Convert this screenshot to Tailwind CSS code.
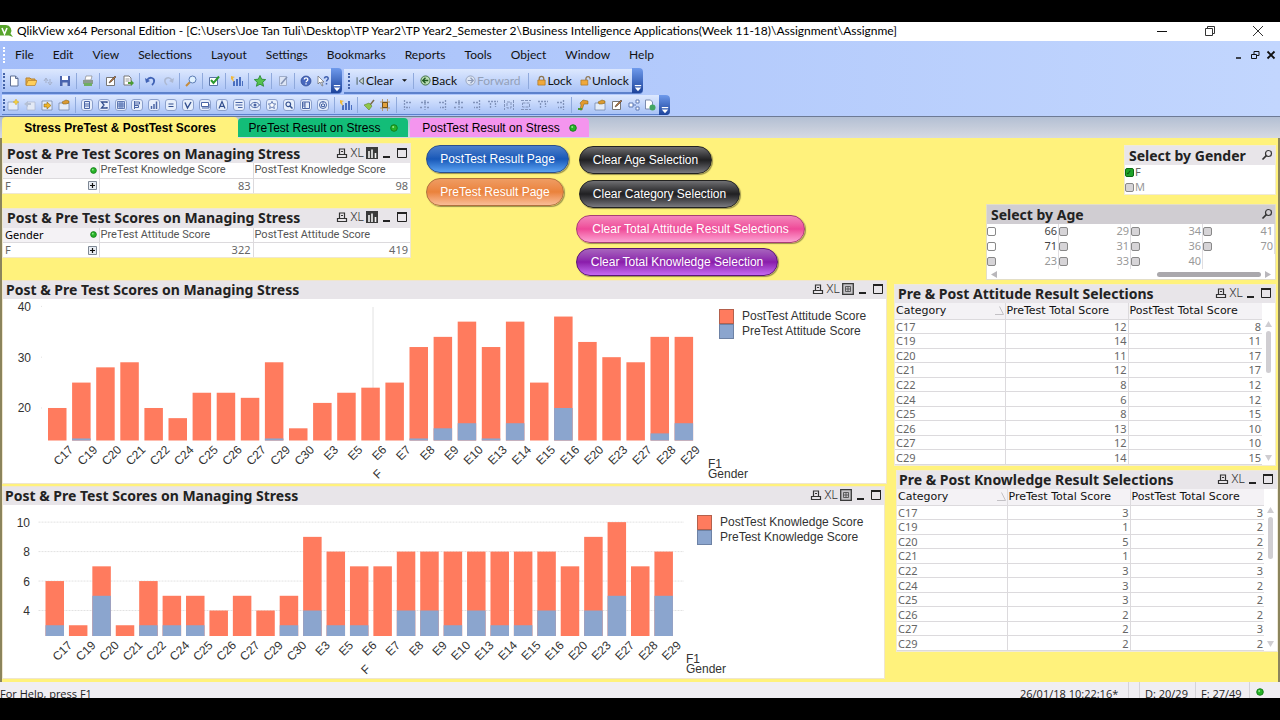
<!DOCTYPE html>
<html lang="en">
<head>
  <meta charset="UTF-8">
  <meta name="viewport" content="width=device-width, initial-scale=1.0">
  <title>QlikView x64 Personal Edition</title>
  <script src="https://cdn.jsdelivr.net/npm/@tailwindcss/browser@4"></script>
</head>
<body class="bg-black min-h-screen overflow-x-hidden font-['Noto_Sans',sans-serif] text-[11px] text-[#222]">

  <!-- Icon set -->
  <svg class="hidden">
    <symbol id="new" viewBox="0 0 12 12"><path d="M2.5 1h5L10 3.500V11H2.500z" fill="#fff" stroke="#5f7096"/><path d="M7.500 1v2.500H10" fill="none" stroke="#5f7096"/></symbol>
    <symbol id="open" viewBox="0 0 12 12"><path d="M1 10V3h4l1 1h4v2" fill="#e8b04a" stroke="#b7812a"/><path d="M1 10.500l2-5h9l-2 5z" fill="#ffcf5c" stroke="#b7812a" stroke-width=".7"/></symbol>
    <symbol id="refresh" viewBox="0 0 12 12"><path d="M2 6l2-3 2 3M4 4v4M6 7l2 3 2-3M8 8V4" fill="none" stroke="#a3afc9"/></symbol>
    <symbol id="save" viewBox="0 0 12 12"><path d="M1 1h10v10H1z" fill="#4a64ad"/><path d="M3 1h6v4H3z" fill="#fff"/><path d="M3.500 7.500h5V11h-5z" fill="#c6d2ef"/></symbol>
    <symbol id="print" viewBox="0 0 12 12"><path d="M3 5l1-4h6L9 5z" fill="#fff" stroke="#777" stroke-width=".6"/><path d="M1 5h10v4H1z" fill="#8c9a90"/><path d="M2 8h8v3H2z" fill="#6fae62"/></symbol>
    <symbol id="edit" viewBox="0 0 12 12"><path d="M1.500 2.500h8v8h-8z" fill="#fff" stroke="#777"/><path d="M4 8l1-2 5-5 1 1-5 5z" fill="#b8753c" stroke="#333" stroke-width=".5"/></symbol>
    <symbol id="export" viewBox="0 0 12 12"><path d="M2 1h5l2 2v7H2z" fill="#fff" stroke="#777"/><path d="M3.500 4h4M3.500 6h4" stroke="#999"/><path d="M6 7h3V5l3 3-3 3V9H6z" fill="#4b9b35"/></symbol>
    <symbol id="undo" viewBox="0 0 12 12"><path d="M2 5c3-4 8-2 7 2 0 1-1 2-2 3" fill="none" stroke="#3f62b5" stroke-width="1.800"/><path d="M0 3l5 3-4 2z" fill="#3f62b5"/></symbol>
    <symbol id="redo" viewBox="0 0 12 12"><path d="M10 5C7 1 2 3 3 7c0 1 1 2 2 3" fill="none" stroke="#adb9d2" stroke-width="1.500"/><path d="M12 3L7 6l4 2z" fill="#adb9d2"/></symbol>
    <symbol id="search" viewBox="0 0 12 12"><path d="M5 7l-4 4" stroke="#c58b3c" stroke-width="2"/><circle cx="7.500" cy="4.500" r="3.500" fill="#dff1ff" stroke="#5d7db5"/></symbol>
    <symbol id="check" viewBox="0 0 12 12"><path d="M1.500 2.500h8v8h-8z" fill="#fff" stroke="#5973a6"/><path d="M3 5l2.500 3L11 1.500" fill="none" stroke="#2d9a2d" stroke-width="2"/></symbol>
    <symbol id="chart" viewBox="0 0 12 12"><path d="M2 6h2v5H2zM5 4h2v7H5zM8 2h2v9H8zM11 6h1v5h-1z" fill="#4b6fc0"/><path d="M0 1l4 1-2 1 1 4-3-3z" fill="#f0b93a"/></symbol>
    <symbol id="star" viewBox="0 0 12 12"><path d="M6 .5l1.700 3.700 4 .4-3 2.700.9 4L6 9.200l-3.600 2.100.9-4-3-2.700 4-.4z" fill="#56c24f" stroke="#23852c" stroke-width=".8"/></symbol>
    <symbol id="note" viewBox="0 0 12 12"><path d="M2.500 1.500h7v9h-7z" fill="#dde5f5" stroke="#9eacc9"/><path d="M4 9l6-7" stroke="#8493b4" stroke-width="1.600"/></symbol>
    <symbol id="help" viewBox="0 0 12 12"><circle cx="6" cy="6" r="5" fill="#4767bd" stroke="#2d478f" stroke-width=".7"/><path d="M4.300 4.600c0-2.200 3.600-2.200 3.500 0C7.700 6 6 6 6 7.300M6 8.300v1.300" fill="none" stroke="#fff" stroke-width="1.300"/></symbol>
    <symbol id="whats" viewBox="0 0 12 12"><path d="M1 1v8l2-2 2 4 1-.5L4.500 7H7z" fill="#fff" stroke="#555" stroke-width=".6"/><path d="M7.500 3.500c0-2.500 3.700-2.500 3.700 0 0 1.500-1.700 1.500-1.700 3M9.500 8v1.500" fill="none" stroke="#3f5fae" stroke-width="1.500"/></symbol>
    <symbol id="sheet" viewBox="0 0 12 12"><path d="M1 3h10v8H1z" fill="#e4ecf9" stroke="#7d93c0" stroke-width=".7"/><path d="M9 0l1 2 2 1-2 1-1 2-1-2-2-1 2-1z" fill="#f5d13e" stroke="#c79d1c" stroke-width=".4"/></symbol>
    <symbol id="sheetprev" viewBox="0 0 12 12"><path d="M3 3h8v8H3z" fill="#e3e9f5" stroke="#aab6ce" stroke-width=".7"/><path d="M0 5l4-3v2h3v2H4v2z" fill="#b5c0d5"/></symbol>
    <symbol id="sheetnext" viewBox="0 0 12 12"><path d="M1 2h10v9H1z" fill="#e4ecf9" stroke="#6c7ea5" stroke-width=".7"/><path d="M3 5h3V3l4 3.500L6 10V8H3z" fill="#f0b429" stroke="#7b5a10" stroke-width=".5"/></symbol>
    <symbol id="sheetprop" viewBox="0 0 12 12"><path d="M1 4h10v7H1z" fill="#e4ecf9" stroke="#6c7ea5" stroke-width=".7"/><path d="M4 3l4-2 3 1v2L8 5 5 5z" fill="#dc9a32" stroke="#7b5a10" stroke-width=".5"/></symbol>
    <symbol id="painter" viewBox="0 0 12 12"><path d="M3 4l3-3 5 1v3L7 5l-2 6H3l1-5z" fill="#e39a2e" stroke="#7b5a10" stroke-width=".5"/><path d="M1 9h4v2H1z" fill="#4b9b35"/></symbol>
    <symbol id="frame" viewBox="0 0 12 12"><rect x=".5" y=".5" width="11" height="11" rx="2.500" fill="#e6eefb" stroke="#8ba0cc"/></symbol>
    <symbol id="o-list" viewBox="0 0 12 12"><use href="#frame"/><path d="M3.500 2.500h5v7h-5zM3.500 5h5M3.500 7h5" fill="none" stroke="#4a65a5"/></symbol>
    <symbol id="o-sum" viewBox="0 0 12 12"><use href="#frame"/><path d="M9 4V3H3.500L6 6 3.500 9H9V8" fill="none" stroke="#34508f" stroke-width="1.300"/></symbol>
    <symbol id="o-table" viewBox="0 0 12 12"><use href="#frame"/><path d="M2.500 2.500h7v7h-7zM2.500 5h7M2.500 7h7M5 2.500v7M7 2.500v7" fill="#bccdf0" stroke="#4a65a5" stroke-width=".8"/></symbol>
    <symbol id="o-multi" viewBox="0 0 12 12"><use href="#frame"/><path d="M3.500 2v8M3.500 3h5v2h-5M3.500 6.500h4v2h-4" fill="none" stroke="#4a65a5"/></symbol>
    <symbol id="o-bars" viewBox="0 0 12 12"><use href="#frame"/><path d="M3.500 10V7M6 10V5M8.500 10V2.500" stroke="#4a65a5" stroke-width="1.500"/></symbol>
    <symbol id="o-input" viewBox="0 0 12 12"><use href="#frame"/><path d="M3.500 5h5M3.500 7.500h5" stroke="#34508f" stroke-width="1.200"/></symbol>
    <symbol id="o-check" viewBox="0 0 12 12"><use href="#frame"/><path d="M3 3.500L5.500 9 9 3" fill="none" stroke="#34508f" stroke-width="1.400"/></symbol>
    <symbol id="o-button" viewBox="0 0 12 12"><use href="#frame"/><path d="M2.500 3.500h7v4h-7z" fill="#fff" stroke="#4a65a5"/><path d="M3 9h7V5" fill="none" stroke="#4a65a5"/></symbol>
    <symbol id="o-text" viewBox="0 0 12 12"><use href="#frame"/><path d="M3 9.500L6 2.500l3 7M4 7.300h4" fill="none" stroke="#34508f" stroke-width="1.200"/></symbol>
    <symbol id="o-line" viewBox="0 0 12 12"><use href="#frame"/><path d="M2.500 3.500h7M2.500 6h7M5 8.500h4.500" stroke="#4a65a5" stroke-width="1.200"/></symbol>
    <symbol id="o-slider" viewBox="0 0 12 12"><use href="#frame"/><path d="M1.500 6c2-3.500 7-3.500 9 0-2 3.500-7 3.500-9 0z" fill="none" stroke="#4a65a5"/><circle cx="6" cy="6" r="1.500" fill="#4a65a5"/></symbol>
    <symbol id="o-star" viewBox="0 0 12 12"><use href="#frame"/><path d="M6 2.300l1.100 2.500 2.600.2-2 1.800.7 2.700L6 8 3.600 9.500l.7-2.700-2-1.800 2.600-.2z" fill="#fff" stroke="#4a65a5" stroke-width=".8"/></symbol>
    <symbol id="o-find" viewBox="0 0 12 12"><use href="#frame"/><circle cx="5.300" cy="5.300" r="2.300" fill="none" stroke="#34508f" stroke-width="1.200"/><path d="M7 7l2.500 2.500" stroke="#34508f" stroke-width="1.500"/></symbol>
    <symbol id="o-cont" viewBox="0 0 12 12"><use href="#frame"/><path d="M2.500 3h7v6.500h-7zM5 3v6.500M2.500 5H5M2.500 7H5" fill="none" stroke="#4a65a5"/></symbol>
    <symbol id="o-custom" viewBox="0 0 12 12"><use href="#frame"/><circle cx="6" cy="6" r="3.500" fill="none" stroke="#4a65a5"/><path d="M6 3v3M4.500 5v2.500h3V5" fill="none" stroke="#4a65a5"/></symbol>
    <symbol id="brush" viewBox="0 0 12 12"><path d="M11 1L7 6" stroke="#7b6a4b" stroke-width="1.500"/><path d="M1 6l5-2 3 3-3 4z" fill="#8fc74a" stroke="#61822c" stroke-width=".6"/></symbol>
    <symbol id="grid" viewBox="0 0 12 12"><path d="M3.500 0v12M8.500 0v12M1 3h10M1 9h10" stroke="#b08a4e" stroke-width=".8"/><path d="M3.500 3.500h5v5h-5z" fill="#e3a13c" stroke="#72521f"/></symbol>
    <symbol id="a-left" viewBox="0 0 12 12"><path d="M2.500 1v10M4 3.500h6M4 8.500h4" stroke="#8294bb" stroke-width="1.300" stroke-dasharray="2 1"/></symbol>
    <symbol id="a-mid" viewBox="0 0 12 12"><path d="M6 1v10M2 3.500h8M1 8.500h3M8 8.500h3" stroke="#8294bb" stroke-width="1.300" stroke-dasharray="2 1"/></symbol>
    <symbol id="a-right" viewBox="0 0 12 12"><path d="M9.500 1v10M8 3.500H2M8 8.500H4" stroke="#8294bb" stroke-width="1.300" stroke-dasharray="2 1"/></symbol>
    <symbol id="a-top" viewBox="0 0 12 12"><path d="M1 2.500h10M3.500 4v6M8.500 4v4" stroke="#8294bb" stroke-width="1.300" stroke-dasharray="2 1"/></symbol>
    <symbol id="a-box" viewBox="0 0 12 12"><path d="M1.500 1v10M10.500 1v10M4 3h4v6H4z" fill="none" stroke="#8294bb" stroke-dasharray="3 1"/></symbol>
    <symbol id="a-wide" viewBox="0 0 12 12"><path d="M1 1.500h10M1 10.500h10M2.500 4h7v4h-7z" fill="none" stroke="#8294bb" stroke-dasharray="3 1"/></symbol>
    <symbol id="link" viewBox="0 0 12 12"><path d="M1 4h4v4H1zM8 1h3v3H8zM8 8h3v3H8z" fill="#fff" stroke="#5f7ab5"/><path d="M5 6h3" stroke="#5f7ab5"/></symbol>
    <symbol id="web" viewBox="0 0 12 12"><path d="M1.500 1h5l2 2v7h-7z" fill="#fff" stroke="#7c8caf"/><circle cx="8.500" cy="8.500" r="3" fill="#43a663"/></symbol>
    <symbol id="more" viewBox="0 0 10 8"><path d="M1 1h8" stroke="#fff" stroke-width="1.500"/><path d="M1 3.500h8L5 8z" fill="#fff"/></symbol>
    <symbol id="lock" viewBox="0 0 12 12"><path d="M3.500 6V4a2.500 2.500 0 015 0v2" fill="none" stroke="#8d7550" stroke-width="1.400"/><path d="M2 5.500h8V11H2z" fill="#efa83c" stroke="#a8701c" stroke-width=".7"/></symbol>
    <symbol id="unlock" viewBox="0 0 12 12"><path d="M6.500 6V3.500a2.300 2.300 0 014.500 0V5" fill="none" stroke="#8d7550" stroke-width="1.400"/><path d="M1 5.500h7.500V11H1z" fill="#efa83c" stroke="#a8701c" stroke-width=".7"/></symbol>
    <symbol id="clear" viewBox="0 0 12 12"><path d="M2.500 1.500v9M10 2L5 6l5 4z" fill="#cfd9d0" stroke="#4d5f5c" stroke-width="1.200"/></symbol>
    <symbol id="back" viewBox="0 0 12 12"><circle cx="6" cy="6" r="5" fill="#b9dcb4" stroke="#3b6b3b"/><path d="M9 6H3.500M6 3L3 6l3 3" fill="none" stroke="#1f5a22" stroke-width="1.500"/></symbol>
    <symbol id="fwd" viewBox="0 0 12 12"><circle cx="6" cy="6" r="5" fill="#dde5f3" stroke="#96a3bd"/><path d="M3 6h5.500M6 3l3 3-3 3" fill="none" stroke="#8c9ab6" stroke-width="1.300"/></symbol>

    <!-- caption icons -->
    <symbol id="c-print" viewBox="0 0 12 12"><path d="M3.500 7V2h5v5M1.500 7.500h9v3h-9zM5 4.500h2" fill="none" stroke="#333" stroke-width="1.200"/></symbol>
    <symbol id="c-chart" viewBox="0 0 12 12"><path d="M0 0h12v12H0z" fill="#3a3a3a"/><path d="M3 11V4M6 11V2.500M9.500 11V6" stroke="#f4f4f4" stroke-width="1.600"/></symbol>
    <symbol id="c-table" viewBox="0 0 12 12"><path d="M.7.7h10.600v10.600H.7z" fill="#c6c4c8" stroke="#3a3a3a" stroke-width="1.300"/><path d="M3.500 3.500h5v5h-5zM6 3.500v5M3.500 6h5" fill="none" stroke="#444" stroke-width=".8"/></symbol>
    <symbol id="c-min" viewBox="0 0 12 12"><path d="M2 10h7" stroke="#222" stroke-width="2"/></symbol>
    <symbol id="c-max" viewBox="0 0 12 12"><path d="M1.500 1.500h9v9h-9z" fill="none" stroke="#222"/><path d="M1 2h10" stroke="#222" stroke-width="2"/></symbol>
    <symbol id="c-find" viewBox="0 0 12 12"><circle cx="7.500" cy="4.500" r="3" fill="none" stroke="#333" stroke-width="1.200"/><path d="M5.300 6.700L1.500 10.500" stroke="#333" stroke-width="1.700"/></symbol>
    <symbol id="plus" viewBox="0 0 9 9"><path d="M.5.5h8v8h-8z" fill="#e9edf3" stroke="#7d8794"/><path d="M4.500 2v5M2 4.500h5" stroke="#111" stroke-width="1.200"/></symbol>
    <symbol id="dot" viewBox="0 0 8 8"><circle cx="4" cy="4" r="3.300" fill="#27b327" stroke="#137a17" stroke-width=".9"/><circle cx="3.200" cy="3" r="1" fill="#8fe68a"/></symbol>
    <symbol id="sort" viewBox="0 0 9 9"><path d="M0 8.500h8.500L4.500.5" fill="none" stroke="#bdbbbf" stroke-width=".9"/></symbol>
  </svg>

  <div class="pt-[22px]">
    <!-- Title bar -->
    <header class="flex h-[19px] items-center overflow-hidden bg-white pb-[2px] font-['Lato',sans-serif] text-[12px] text-black">
      <svg class="mr-1 h-[14px] w-[13px] shrink-0" viewBox="0 0 13 14"><path d="M0 1h6a5.500 5.500 0 014.500 8.500L13 13l-4-1.500H0z" fill="#58a52c"/><path d="M2 4l2.500 6L7 4" fill="none" stroke="#fff" stroke-width="1.600"/></svg>
      <h1 class="flex-1 whitespace-nowrap">QlikView x64 Personal Edition - [C:\Users\Joe Tan Tuli\Desktop\TP Year2\TP Year2_Semester 2\Business Intelligence Applications(Week 11-18)\Assignment\Assignme]</h1>
      <div class="flex shrink-0 gap-9 pr-4">
        <button aria-label="Minimize"><svg class="size-3" viewBox="0 0 12 12"><path d="M1 6.500h10" stroke="#111"/></svg></button>
        <button aria-label="Restore"><svg class="size-3" viewBox="0 0 12 12"><path d="M1.500 3.500h7v7h-7zM3.500 3V1.500h7v7H9" fill="none" stroke="#333"/></svg></button>
        <button aria-label="Close"><svg class="size-3" viewBox="0 0 12 12"><path d="M1 1l10 10M11 1L1 11" stroke="#333"/></svg></button>
      </div>
    </header>

    <!-- Menu and toolbars -->
    <div class="bg-linear-to-r from-[#a3bdf9] to-[#c2d6fe] font-['Lato',sans-serif] text-[12px] text-[#111]">
      <nav class="flex h-7 items-center pl-[3px]">
        <span class="h-4 border-l-2 border-dotted border-white"></span>
        <div id="menu" class="flex flex-1 gap-[19px] pl-[10px]"></div>
        <div class="flex gap-1 pr-[3px]">
          <button aria-label="Minimize document"><svg class="size-3" viewBox="0 0 12 12"><path d="M3 9h5" stroke="#111" stroke-width="1.500"/></svg></button>
          <button aria-label="Restore document"><svg class="size-3" viewBox="0 0 12 12"><path d="M2.500 5.500h5v4h-5zM5 5V2.500h5v4H8" fill="none" stroke="#111"/></svg></button>
          <button aria-label="Close document"><svg class="size-3" viewBox="0 0 12 12"><path d="M2.500 2.500l7 7M9.500 2.500l-7 7" stroke="#111" stroke-width="1.800"/></svg></button>
        </div>
      </nav>
      <div class="flex h-[26px] gap-[2px] pl-[2px]">
        <div class="flex h-[25px] w-[340px] items-center rounded-r border-b-2 border-[#5c81cc] bg-linear-to-b from-[#dde8fe] to-[#a9c2f6]">
          <span class="ml-px h-4 border-l-2 border-dotted border-[#4463a8]"></span>
          <div id="bar1" class="flex flex-1 items-center"></div>
          <button class="flex h-[25px] w-[11px] shrink-0 items-end justify-center rounded-r bg-linear-to-b from-[#6f9aec] to-[#1d439b] pb-px" aria-label="Toolbar options"><svg class="h-2 w-2"><use href="#more"/></svg></button>
        </div>
        <div class="flex h-[25px] w-[299px] items-center rounded-r border-b-2 border-[#5c81cc] bg-linear-to-b from-[#dde8fe] to-[#a9c2f6]">
          <span class="ml-1 h-4 border-l-2 border-dotted border-[#4463a8]"></span>
          <div class="flex flex-1 items-center pl-[5px]">
            <button class="flex items-center gap-px"><svg class="size-[10px]"><use href="#clear"/></svg>Clear</button>
            <svg class="ml-2 h-[3px] w-[5px]" viewBox="0 0 6 3"><path d="M0 0h6L3 3z" fill="#111"/></svg>
            <span class="mx-[6px] h-4 w-px bg-[#8fa9dc]"></span>
            <button class="flex items-center gap-px"><svg class="size-[11px]"><use href="#back"/></svg>Back</button>
            <button class="ml-2 flex items-center gap-px text-[#93a0b8]"><svg class="size-[11px]"><use href="#fwd"/></svg>Forward</button>
            <span class="mx-[7px] h-4 w-px bg-[#8fa9dc]"></span>
            <button class="flex items-center gap-px"><svg class="size-[11px]"><use href="#lock"/></svg>Lock</button>
            <button class="ml-2 flex items-center gap-px"><svg class="size-[11px]"><use href="#unlock"/></svg>Unlock</button>
          </div>
          <button class="flex h-[25px] w-[11px] shrink-0 items-end justify-center rounded-r bg-linear-to-b from-[#6f9aec] to-[#1d439b] pb-px" aria-label="Toolbar options"><svg class="h-2 w-2"><use href="#more"/></svg></button>
        </div>
      </div>
      <div class="flex h-[21px] pl-[2px]">
        <div class="flex h-5 w-[668px] items-center rounded-r border-b border-[#5c81cc] bg-linear-to-b from-[#dde8fe] to-[#a9c2f6]">
          <span class="ml-px h-3 border-l-2 border-dotted border-[#4463a8]"></span>
          <div id="bar2" class="flex flex-1 items-center"></div>
          <button class="flex h-5 w-[11px] shrink-0 items-end justify-center rounded-r bg-linear-to-b from-[#6f9aec] to-[#1d439b] pb-px" aria-label="Toolbar options"><svg class="h-2 w-2"><use href="#more"/></svg></button>
        </div>
      </div>
    </div>

    <!-- Sheet tabs -->
    <div class="flex h-[22px] items-end border-t border-[#6d7a95] bg-linear-to-b from-[#b3bfd3] to-[#d6d9e2] pl-[2px] font-['Liberation_Sans',sans-serif] text-[12px] text-black">
      <button class="h-[21px] w-[236px] rounded-t bg-[#fff27c] font-bold">Stress PreTest &amp; PostTest Scores</button>
      <button class="mb-px flex h-[19px] w-[170px] items-center justify-center gap-[9px] rounded-t bg-[#13bd78]">PreTest Result on Stress<svg class="size-2"><use href="#dot"/></svg></button>
      <button class="mb-px ml-[2px] flex h-[19px] w-[179px] items-center justify-center gap-[9px] rounded-t bg-[#f495ee]">PostTest Result on Stress<svg class="size-2"><use href="#dot"/></svg></button>
    </div>

    <!-- Sheet -->
    <main class="border-x-2 border-l-[#8b845c] border-r-[#8b845c] bg-[#fff27c] pb-[3px]">
      <div class="flex h-[142px]">
        <div class="flex w-[409px] flex-col gap-[14px] pt-[5px]">
          <section class="border border-[#f0e8d0]">
            <div class="flex h-[19px] items-center bg-[#e8e5e9] pr-[2px] pl-1">
              <h2 class="flex-1 font-bold text-[14px] leading-[18px] text-[#222]">Post &amp; Pre Test Scores on Managing Stress</h2>
              <div class="caption-icons mb-[2px] flex gap-[3px]" data-icons="print xl chart min max"></div>
            </div>
            <table class="w-full table-fixed bg-white leading-[14px]">
              <thead>
                <tr class="h-[15px] border-b border-[#dcdadd] text-left text-[#555]">
                  <th class="w-[96px] border-r border-[#dcdadd] bg-[#f4f2f5] px-[2px] font-normal text-black"><div class="flex items-center justify-between">Gender<svg class="size-[7px]"><use href="#dot"/></svg></div></th>
                  <th class="w-[154px] border-r border-[#dcdadd] px-px font-['Roboto',sans-serif] font-normal">PreTest Knowledge Score</th>
                  <th class="px-px font-['Roboto',sans-serif] font-normal">PostTest Knowledge Score</th>
                </tr>
              </thead>
              <tbody>
                <tr class="text-right text-[#666]">
                  <td class="border-r border-[#dcdadd] px-[2px]"><div class="flex items-center justify-between">F<svg class="size-[9px]"><use href="#plus"/></svg></div></td>
                  <td class="border-r border-[#dcdadd] px-[2px]">83</td>
                  <td class="px-[2px]">98</td>
                </tr>
              </tbody>
            </table>
          </section>
          <section class="border border-[#f0e8d0]">
            <div class="flex h-[19px] items-center bg-[#e8e5e9] pr-[2px] pl-1">
              <h2 class="flex-1 font-bold text-[14px] leading-[18px] text-[#222]">Post &amp; Pre Test Scores on Managing Stress</h2>
              <div class="caption-icons mb-[2px] flex gap-[3px]" data-icons="print xl chart min max"></div>
            </div>
            <table class="w-full table-fixed bg-white leading-[14px]">
              <thead>
                <tr class="h-[15px] border-b border-[#dcdadd] text-left text-[#555]">
                  <th class="w-[96px] border-r border-[#dcdadd] bg-[#f4f2f5] px-[2px] font-normal text-black"><div class="flex items-center justify-between">Gender<svg class="size-[7px]"><use href="#dot"/></svg></div></th>
                  <th class="w-[154px] border-r border-[#dcdadd] px-px font-['Roboto',sans-serif] font-normal">PreTest Attitude Score</th>
                  <th class="px-px font-['Roboto',sans-serif] font-normal">PostTest Attitude Score</th>
                </tr>
              </thead>
              <tbody>
                <tr class="text-right text-[#666]">
                  <td class="border-r border-[#dcdadd] px-[2px]"><div class="flex items-center justify-between">F<svg class="size-[9px]"><use href="#plus"/></svg></div></td>
                  <td class="border-r border-[#dcdadd] px-[2px]">322</td>
                  <td class="px-[2px]">419</td>
                </tr>
              </tbody>
            </table>
          </section>
        </div>

        <div class="flex flex-col items-start gap-[5px] pt-[7px] pl-[15px] font-['Liberation_Sans',sans-serif] text-[12px] text-white">
          <button class="h-7 w-[143px] rounded-full border border-[#2b4f8e] bg-linear-to-b from-[#4c7fcb] via-[#1858b8] to-[#5aa2f2] shadow-[1px_1px_1px_#0006]">PostTest Result Page</button>
          <button class="h-7 w-[138px] rounded-full border border-[#b0713f] bg-linear-to-b from-[#ef9c62] via-[#ea823b] to-[#f9bd96] shadow-[1px_1px_1px_#0006]">PreTest Result Page</button>
        </div>
        <div class="flex flex-col items-start pt-2 pl-[7px] font-['Liberation_Sans',sans-serif] text-[12px] text-white">
          <button class="ml-[3px] h-7 w-[133px] rounded-full border border-[#222] bg-linear-to-b from-[#707073] via-[#202022] to-[#7a7a80] shadow-[1px_1px_1px_#0006]">Clear Age Selection</button>
          <button class="mt-[6px] ml-[3px] h-7 w-[161px] rounded-full border border-[#222] bg-linear-to-b from-[#707073] via-[#202022] to-[#7a7a80] shadow-[1px_1px_1px_#0006]">Clear Category Selection</button>
          <button class="mt-[7px] h-7 w-[229px] rounded-full border border-[#a83d75] bg-linear-to-b from-[#f285bb] via-[#ee4898] to-[#fba0d4] shadow-[1px_1px_1px_#0006]">Clear Total Attitude Result Selections</button>
          <button class="mt-[5px] h-7 w-[202px] rounded-full border border-[#5a1675] bg-linear-to-b from-[#a763bd] via-[#8a1bab] to-[#c669f2] shadow-[1px_1px_1px_#0006]">Clear Total Knowledge Selection</button>
        </div>

        <div class="ml-auto flex flex-col items-end gap-[9px] pt-[7px] pr-[2px]">
          <fieldset class="h-[50px] w-[152px] border border-[#f0ead8] bg-white text-[#666]">
            <div class="flex h-[19px] items-center justify-between bg-[#e8e5e9] pr-[2px] pl-1">
              <h2 class="font-bold text-[14px] leading-[18px] text-[#222]">Select by Gender</h2>
              <button class="mb-[2px]" aria-label="Search gender"><svg class="size-3"><use href="#c-find"/></svg></button>
            </div>
            <label class="flex h-[15px] items-center gap-px"><input type="checkbox" checked class="size-[9px] appearance-none rounded-xs border border-[#0d6b13] bg-[#1fa329] after:block after:text-[7px] after:leading-[7px] after:text-[#063f0a] after:content-['✓']">F</label>
            <label class="flex h-[14px] items-center gap-px text-[#999]"><input type="checkbox" class="size-[9px] appearance-none rounded-xs border border-[#888] bg-[#d6d4d7]">M</label>
          </fieldset>
          <fieldset class="w-[290px] border border-[#e4dfc6] bg-white text-[#999]">
            <div class="flex h-[19px] items-center justify-between bg-[#d0cdd2] pr-[2px] pl-1">
              <h2 class="font-bold text-[14px] leading-[18px] text-[#222]">Select by Age</h2>
              <button class="mb-[2px]" aria-label="Search age"><svg class="size-3"><use href="#c-find"/></svg></button>
            </div>
            <div id="ages" class="grid h-[45px] grid-flow-col grid-cols-4 grid-rows-3"></div>
            <div class="flex h-[10px] items-center gap-[2px] px-1">
              <svg class="h-[7px] w-[6px]" viewBox="0 0 6 7"><path d="M6 0v7L0 3.500z" fill="#b9b7bb"/></svg>
              <span class="ml-auto h-[5px] w-[104px] rounded-full bg-[#aaa8ac]"></span>
              <svg class="ml-[2px] h-[7px] w-[6px]" viewBox="0 0 6 7"><path d="M0 0v7l6-3.500z" fill="#b9b7bb"/></svg>
            </div>
          </fieldset>
        </div>
      </div>

      <div class="flex gap-[7px]">
        <!-- Charts -->
        <div class="flex min-w-0 flex-1 flex-col gap-[2px]">
          <section class="border border-[#f0e6cd] bg-white">
            <div class="flex h-[18px] items-center bg-[#e8e5e9] pr-[2px] pl-[3px]">
              <h2 class="flex-1 font-bold text-[14px] leading-[18px] text-[#222]">Post &amp; Pre Test Scores on Managing Stress</h2>
              <div class="caption-icons mb-[2px] flex gap-[3px]" data-icons="print xl table min max"></div>
            </div>
            <div class="flex font-['Liberation_Sans',sans-serif] text-[12px] text-[#333]">
              <svg id="attitude" width="705" height="184" class="shrink-0 fill-[#333]"></svg>
              <div class="flex flex-col justify-between pt-[10px] pb-1">
                <ul class="ml-[11px] leading-[15px]">
                  <li class="flex gap-2"><span class="size-[15px] border border-[#b4604c] bg-[#ff7b5e]"></span>PostTest Attitude Score</li>
                  <li class="flex gap-2"><span class="size-[15px] border border-[#6d82a5] bg-[#8ba5ce]"></span>PreTest Attitude Score</li>
                </ul>
                <p class="leading-[10px]">F1<br>Gender</p>
              </div>
            </div>
          </section>
          <section class="mr-[2px] border border-[#f0e6cd] bg-white">
            <div class="flex h-[18px] items-center bg-[#e8e5e9] pr-[2px] pl-[2px]">
              <h2 class="flex-1 font-bold text-[14px] leading-[18px] text-[#222]">Post &amp; Pre Test Scores on Managing Stress</h2>
              <div class="caption-icons mb-[2px] flex gap-[3px]" data-icons="print xl table min max"></div>
            </div>
            <div class="flex font-['Liberation_Sans',sans-serif] text-[12px] text-[#333]">
              <svg id="knowledge" width="683" height="173" class="shrink-0 fill-[#333]"></svg>
              <div class="flex flex-col justify-between pt-[10px] pb-1">
                <ul class="ml-[11px] leading-[15px]">
                  <li class="flex gap-2"><span class="size-[15px] border border-[#b4604c] bg-[#ff7b5e]"></span>PostTest Knowledge Score</li>
                  <li class="flex gap-2"><span class="size-[15px] border border-[#6d82a5] bg-[#8ba5ce]"></span>PreTest Knowledge Score</li>
                </ul>
                <p class="leading-[10px]">F1<br>Gender</p>
              </div>
            </div>
          </section>
        </div>

        <!-- Result tables -->
        <div class="flex w-[384px] flex-col gap-1 pt-1">
          <section class="mr-[2px] border border-[#f0ead8] bg-white">
            <div class="flex h-[18px] items-center bg-[#e8e5e9] pr-[3px] pl-[3px]">
              <h2 class="flex-1 font-bold text-[14px] leading-[18px] text-[#222]">Pre &amp; Post Attitude Result Selections</h2>
              <div class="caption-icons mb-[2px] flex gap-[3px]" data-icons="print xl min max"></div>
            </div>
            <div class="flex">
              <table id="attitudeTable" class="h-[162px] flex-1 table-fixed leading-[13px]"></table>
              <div class="flex w-[13px] flex-col items-center pt-[18px] pb-1">
                <svg class="h-[6px] w-[7px]" viewBox="0 0 7 6"><path d="M0 6h7L3.500 0z" fill="#cfcdd1"/></svg>
                <span class="mt-1 h-[42px] w-[5px] rounded-full bg-[#d0ced2]"></span>
                <svg class="mt-auto h-[6px] w-[7px]" viewBox="0 0 7 6"><path d="M0 0h7L3.500 6z" fill="#cfcdd1"/></svg>
              </div>
            </div>
          </section>
          <section class="ml-[2px] border border-[#f0ead8] bg-white">
            <div class="flex h-[18px] items-center bg-[#e8e5e9] pr-[3px] pl-[2px]">
              <h2 class="flex-1 font-bold text-[14px] leading-[18px] text-[#222]">Pre &amp; Post Knowledge Result Selections</h2>
              <div class="caption-icons mb-[2px] flex gap-[3px]" data-icons="print xl min max"></div>
            </div>
            <div class="flex">
              <table id="knowledgeTable" class="h-[162px] flex-1 table-fixed leading-[13px]"></table>
              <div class="flex w-[13px] flex-col items-center pt-[18px] pb-1">
                <svg class="h-[6px] w-[7px]" viewBox="0 0 7 6"><path d="M0 6h7L3.500 0z" fill="#cfcdd1"/></svg>
                <span class="mt-1 h-[42px] w-[5px] rounded-full bg-[#d0ced2]"></span>
                <svg class="mt-auto h-[6px] w-[7px]" viewBox="0 0 7 6"><path d="M0 0h7L3.500 6z" fill="#cfcdd1"/></svg>
              </div>
            </div>
          </section>
        </div>
      </div>
    </main>

    <!-- Status bar -->
    <footer class="flex h-4 overflow-hidden bg-[#f0eef2] font-['Open_Sans',sans-serif] text-[11px] leading-6 text-[#222]">
      <p class="flex-1">For Help, press F1</p>
      <p class="w-[109px] border-r border-[#d5d3d7]">26/01/18 10:22:16*</p>
      <p class="ml-[10px] w-[57px] border-x border-[#d5d3d7] pl-[5px]">D: 20/29</p>
      <p class="w-[54px] border-r border-[#d5d3d7] pl-[5px]">F: 27/49</p>
      <svg class="mt-[6px] mr-4 ml-[6px] size-2"><use href="#dot"/></svg>
    </footer>
  </div>

  <script>
    const CATEGORIES = 'C17 C19 C20 C21 C22 C24 C25 C26 C27 C29 C30 E3 E5 E6 E7 E8 E9 E10 E13 E14 E15 E16 E20 E23 E27 E28 E29'.split(' ');

    document.getElementById('menu').innerHTML = 'File,Edit,View,Selections,Layout,Settings,Bookmarks,Reports,Tools,Object,Window,Help'
      .split(',').map(name => `<button>${name}</button>`).join('');

    // "|" puts a separator between two groups of buttons
    function fillToolbar(id, icons, size) {
      document.getElementById(id).innerHTML = icons.split(' ').map(name => name === '|'
        ? '<span class="flex w-[6px] justify-center"><i class="h-4 w-px bg-[#8fa9dc]"></i></span>'
        : `<button class="flex flex-1 justify-center" aria-label="${name}"><svg class="${size}"><use href="#${name}"/></svg></button>`).join('');
    }
    fillToolbar('bar1', 'new open refresh save | print | edit export | undo redo | search | check | chart | star | note | help whats', 'size-3');
    fillToolbar('bar2', 'sheet sheetprev sheetnext sheetprop | o-list o-sum o-table o-multi o-bars o-input o-check o-button o-text o-line o-slider o-star o-find o-cont o-custom | chart | brush grid | a-left a-mid a-right a-mid a-right a-top a-box a-wide a-top a-right | painter sheetprop edit link web', 'size-3');

    document.querySelectorAll('.caption-icons').forEach(el => {
      el.innerHTML = el.dataset.icons.split(' ').map(name => name === 'xl'
        ? '<button class="flex w-3 justify-center font-[\'Roboto\',sans-serif] text-[12px] leading-3 font-light text-[#333]">XL</button>'
        : `<button aria-label="${name}"><svg class="size-3"><use href="#c-${name}"/></svg></button>`).join('');
    });

    // Age list box, filled column by column
    const ages = [66, 71, 23, 29, 31, 33, 34, 36, 40, 41, 70];
    document.getElementById('ages').innerHTML = ages.map((age, i) => i < 2
      ? `<label class="flex items-center justify-between border-r border-[#e0dee1] pr-px text-[#444]"><input type="checkbox" class="size-[9px] appearance-none rounded-xs border border-[#888] bg-white">${age}</label>`
      : `<label class="flex items-center justify-between border-r border-[#e0dee1] pr-px"><input type="checkbox" class="size-[9px] appearance-none rounded-xs border border-[#888] bg-[#d6d4d7]">${age}</label>`).join('');

    function fillTable(id, rows) {
      document.getElementById(id).innerHTML = `
        <thead><tr class="h-4 border-b border-[#dcdadd] bg-[#f4f2f5] text-left font-['DejaVu_Sans',sans-serif] text-[#111]">
          <th class="w-[110px] border-r border-[#dcdadd] px-px font-normal"><div class="flex items-center justify-between">Category<svg class="size-[9px]"><use href="#sort"/></svg></div></th>
          <th class="w-[123px] border-r border-[#dcdadd] px-px font-normal">PreTest Total Score</th>
          <th class="px-px font-normal">PostTest Total Score</th>
        </tr></thead>
        <tbody>${rows.map((row, i) => `<tr class="border-b border-[#dcdadd] text-right text-[#666]">
          <td class="border-r border-[#dcdadd] px-px text-left">${CATEGORIES[i]}</td>
          <td class="border-r border-[#dcdadd] px-px">${row[0]}</td>
          <td class="px-px">${row[1]}</td></tr>`).join('')}</tbody>`;
    }
    fillTable('attitudeTable', [[12, 8], [14, 11], [11, 17], [12, 17], [8, 12], [6, 12], [8, 15], [13, 10], [12, 10], [14, 15]]);
    fillTable('knowledgeTable', [[3, 3], [1, 2], [5, 2], [1, 2], [3, 3], [3, 2], [3, 2], [2, 2], [2, 3], [2, 2]]);

    // The PreTest bar is drawn in front of the PostTest bar, both from the same base line
    function drawChart(id, o) {
      const y = v => o.base - (v - o.min) * o.unit;
      let out = '';
      o.ticks.forEach(t => {
        out += `<path d="M${o.left - 7} ${y(t)}H${o.gridTo}" stroke="#e2e2e2" stroke-dasharray="2 1"/>`;
        out += `<text x="${o.tickX}" y="${y(t) + 4.5}" text-anchor="end">${t}</text>`;
      });
      if (o.divider) out += `<path d="M${o.divider} 8V${o.base}" stroke="#e2e2e2"/>`;
      o.post.forEach((v, i) => {
        const x = o.left + i * o.step;
        out += `<rect x="${x}" y="${y(v)}" width="18.500" height="${o.base - y(v)}" fill="#ff7b5e"/>`;
        if (o.pre[i]) out += `<rect x="${x}" y="${y(o.pre[i])}" width="18.500" height="${o.base - y(o.pre[i])}" fill="#8ba5ce"/>`;
        out += `<text text-anchor="end" transform="translate(${o.labelX + i * o.step} ${o.base + 10}) rotate(-45)">${CATEGORIES[i]}</text>`;
      });
      out += `<text transform="translate(${o.groupX} ${o.base + 39}) rotate(-45)">F</text>`;
      document.getElementById(id).innerHTML = out;
    }
    drawChart('attitude', {
      left: 45, step: 24.1, labelX: 71, base: 141.5, min: 13.6, unit: 5.08, ticks: [20, 30, 40], tickX: 28, gridTo: 39, divider: 370, groupX: 375,
      post: [20, 25, 28, 29, 20, 18, 23, 23, 22, 29, 16, 21, 23, 24, 25, 32, 34, 37, 32, 37, 25, 38, 33, 30, 29, 34, 34],
      pre: [0, 14, 0, 0, 0, 0, 0, 0, 0, 14, 0, 0, 0, 0, 0, 14, 16, 17, 14, 17, 0, 20, 0, 0, 0, 15, 17]
    });
    drawChart('knowledge', {
      left: 42.5, step: 23.42, labelX: 70, base: 131, min: 2.27, unit: 14.73, ticks: [4, 6, 8, 10], tickX: 27, gridTo: 681, groupX: 363,
      post: [6, 3, 7, 3, 6, 5, 5, 4, 5, 4, 5, 9, 8, 7, 7, 8, 8, 8, 8, 8, 8, 8, 7, 9, 10, 7, 8],
      pre: [3, 0, 5, 0, 3, 3, 3, 0, 0, 0, 3, 4, 3, 3, 0, 4, 4, 3, 4, 3, 3, 4, 0, 4, 5, 0, 5]
    });
  </script>
</body>
</html>
